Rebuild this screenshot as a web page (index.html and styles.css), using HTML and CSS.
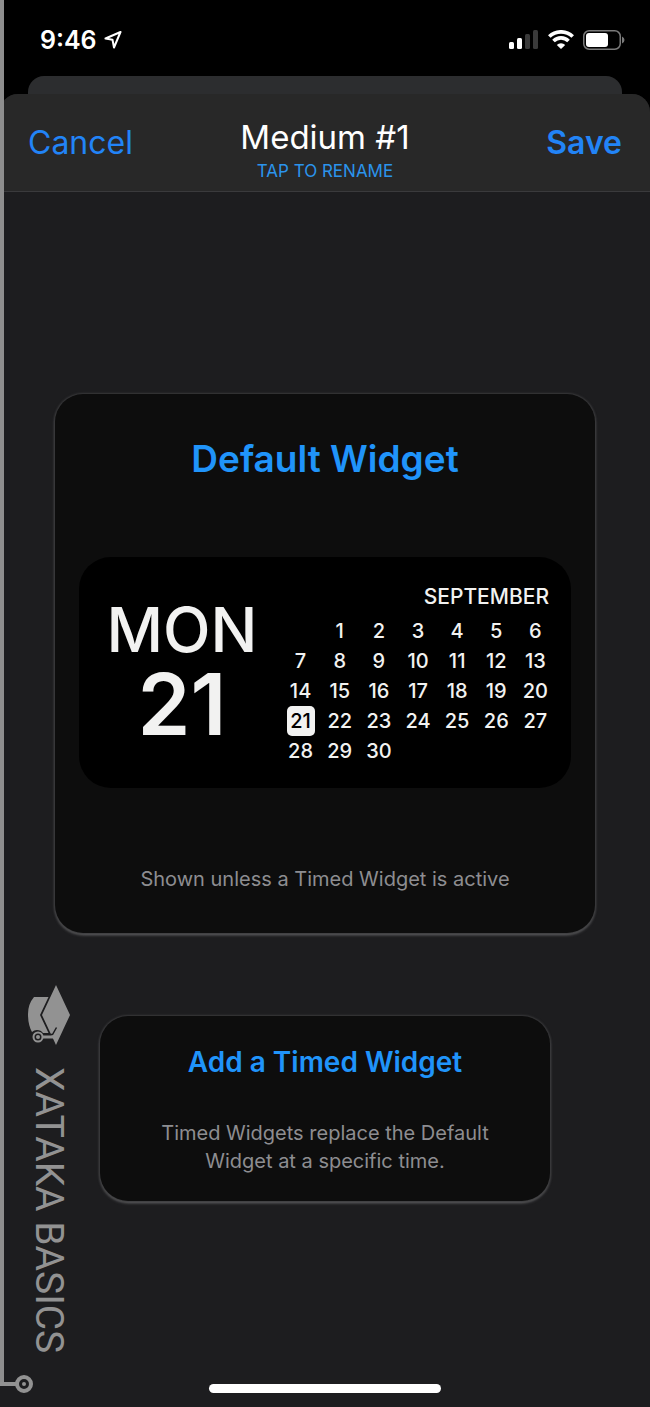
FILE: index.html
```html
<!DOCTYPE html>
<html lang="en">

<head>
    <meta charset="utf-8">
    <meta name="viewport" content="width=device-width, initial-scale=1">
    <title>Medium #1</title>
    <link rel="stylesheet" href="styles.css">
</head>

<body>

    <div class="status-bar">
        <div class="status-left">
            <span class="clock">9:46</span>
            <svg class="location-icon" width="18" height="18" viewBox="0 0 18 18">
                <path d="M16.500 1 L1.500 7.500 L8.500 8.800 L10 16.500 Z" />
            </svg>
        </div>
        <div class="status-right">
            <svg width="30" height="20" viewBox="0 0 30 20" fill="#fff">
                <rect x="0" y="12" width="5" height="7" rx="1.500" />
                <rect x="8" y="8" width="5" height="11" rx="1.500" />
                <rect x="16" y="4" width="5" height="15" rx="1.500" fill="#3a3a3a" />
                <rect x="24" y="0" width="5" height="19" rx="1.500" fill="#3a3a3a" />
            </svg>
            <svg width="26" height="20" viewBox="0 0 26 20" fill="none" stroke="#fff" stroke-width="3.700">
                <path d="M1.300 6.500 A17 17 0 0 1 24.700 6.500" />
                <path d="M5.500 11 A10.800 10.800 0 0 1 20.500 11" />
                <path d="M13 19 L8.800 14.900 A6 6 0 0 1 17.200 14.900 Z" fill="#fff" stroke="none" />
            </svg>
            <svg width="42" height="20" viewBox="0 0 42 20">
                <rect x="0.750" y="0.750" width="36.500" height="18.500" rx="5.500" fill="none" stroke="#7a7a7a" stroke-width="1.500" />
                <rect x="3" y="3" width="22" height="14" rx="3" fill="#fff" />
                <path d="M39 6.500 Q41.500 7.500 41.500 10 Q41.500 12.500 39 13.500 Z" fill="#7a7a7a" />
            </svg>
        </div>
    </div>

    <!-- edge of the page behind the sheet -->
    <div class="sheet-behind"></div>

    <div class="sheet">
        <header class="sheet-header">
            <button class="header-btn">Cancel</button>
            <div class="title-box">
                <h1>Medium #1</h1>
                <button class="rename-btn">TAP TO RENAME</button>
            </div>
            <button class="header-btn save-btn">Save</button>
        </header>

        <main class="content">
            <section class="card default-card">
                <h2>Default Widget</h2>
                <div class="widget">
                    <div class="today">
                        <div class="weekday">MON</div>
                        <div class="day">21</div>
                    </div>
                    <table class="month">
                        <caption>SEPTEMBER</caption>
                        <tbody>
                            <tr><td></td><td>1</td><td>2</td><td>3</td><td>4</td><td>5</td><td>6</td></tr>
                            <tr><td>7</td><td>8</td><td>9</td><td>10</td><td>11</td><td>12</td><td>13</td></tr>
                            <tr><td>14</td><td>15</td><td>16</td><td>17</td><td>18</td><td>19</td><td>20</td></tr>
                            <tr><td><span class="current">21</span></td><td>22</td><td>23</td><td>24</td><td>25</td><td>26</td><td>27</td></tr>
                            <tr><td>28</td><td>29</td><td>30</td><td></td><td></td><td></td><td></td></tr>
                        </tbody>
                    </table>
                </div>
                <p>Shown unless a Timed Widget is active</p>
            </section>

            <section class="card timed-card">
                <button class="add-btn">Add a Timed Widget</button>
                <p>Timed Widgets replace the Default Widget at a specific time.</p>
            </section>
        </main>

        <div class="home-indicator"></div>
    </div>

    <!-- watermark over the left edge -->
    <div class="watermark">
        <svg class="cap-icon" width="42" height="60" viewBox="0 0 42 60">
            <path d="M6 12 H20.500 L12 30 L20.500 48 H15 Q13 45 9 45 Q6 45 4 47 Q0 40 0 29 Q0 19 6 12 Z" />
            <path d="M28 0 L42 30 L28 60 L14 30 Z" />
            <path d="M15 49.500 H24.500 L28.500 42.500" fill="none" stroke="#1d1d1f" stroke-width="1.500" />
            <path d="M15 54.500 H25" fill="none" stroke="#1d1d1f" stroke-width="1.500" />
            <circle cx="10" cy="52" r="4.500" fill="#1d1d1f" stroke="#929292" stroke-width="2" />
            <circle cx="10" cy="52" r="2" />
            <path d="M14.500 50.500 H26 V53.500 H14.500 Z" />
        </svg>
        <span class="brand">XATAKA BASICS</span>
    </div>
    <div class="edge-line"></div>
    <svg class="edge-node" width="34" height="20" viewBox="0 0 34 20">
        <path d="M0 10 H16" fill="none" stroke="#929292" stroke-width="4" />
        <circle cx="24" cy="10" r="7" fill="#1d1d1f" stroke="#929292" stroke-width="4" />
        <circle cx="24" cy="10" r="2" />
    </svg>

</body>

</html>
```
FILE: styles.css
```css
* {
    box-sizing: border-box;
}

body {
    margin: 0;
    min-height: 100vh;
    display: flex;
    flex-direction: column;
    position: relative;
    background: #000;
    color: #fff;
    font-family: Inter, "Liberation Sans", sans-serif;
}

h1,
h2,
p {
    margin: 0;
}

button {
    border: none;
    padding: 0;
    background: none;
    font-family: inherit;
    cursor: pointer;
}

/* status bar */
.status-bar {
    height: 76px;
    padding: 4px 25px 0 40px;
    display: flex;
    align-items: center;
    justify-content: space-between;
}

.status-left {
    display: flex;
    align-items: center;
    gap: 7px;
}

.clock {
    font-size: 25px;
    font-weight: 600;
}

.location-icon {
    fill: none;
    stroke: #fff;
    stroke-width: 2;
    stroke-linejoin: round;
}

.status-right {
    display: flex;
    align-items: center;
    gap: 9px;
}

.sheet-behind {
    height: 36px;
    margin: 0 28px -18px;
    border-radius: 16px 16px 0 0;
    background: #2c2d2f;
}

/* sheet */
.sheet {
    flex-grow: 1;
    display: flex;
    flex-direction: column;
    position: relative;
    border-radius: 18px 18px 0 0;
    background: #1d1d1f;
    overflow: hidden;
}

.sheet-header {
    height: 98px;
    padding: 0 28px;
    display: grid;
    grid-template-columns: 1fr auto 1fr;
    align-items: center;
    background: #282828;
    border-bottom: 1px solid #3a3a3c;
}

.header-btn {
    justify-self: start;
    color: #2284f7;
    font-size: 32px;
}

.save-btn {
    justify-self: end;
    font-weight: 600;
}

.title-box {
    display: flex;
    flex-direction: column;
    align-items: center;
    padding-top: 16px;
}

h1 {
    font-size: 33px;
    font-weight: 400;
    line-height: 40px;
}

.rename-btn {
    color: #2b94ec;
    font-size: 17px;
    line-height: 28px;
}

.content {
    flex-grow: 1;
    padding: 202px 55px 0;
    display: flex;
    flex-direction: column;
    align-items: center;
    gap: 83px;
}

/* cards */
.card {
    display: flex;
    flex-direction: column;
    align-items: center;
    text-align: center;
    background: #0d0d0d;
    border-radius: 28px;
    box-shadow: 0 0 2px 1px #38383a, 0 2px 3px #6c6c6e;
}

.card p {
    color: #8d8d91;
    font-size: 20px;
    line-height: 28px;
}

.default-card {
    width: 100%;
    max-width: 720px;
    padding: 40px 24px;
}

h2 {
    color: #2094fa;
    font-size: 37px;
    font-weight: 600;
    line-height: 50px;
}

.widget {
    width: 100%;
    margin: 73px 0 77px;
    padding: 21px 16px 22px 24px;
    display: flex;
    align-items: center;
    justify-content: space-between;
    background: #000;
    border-radius: 32px;
    color: #f2f2f1;
}

.today {
    width: 158px;
    padding-bottom: 10px;
}

.weekday {
    font-size: 62px;
    font-weight: 500;
    line-height: 75px;
}

.day {
    font-size: 85px;
    font-weight: 600;
    line-height: 75px;
}

.month {
    width: 274px;
    table-layout: fixed;
    border-collapse: collapse;
    font-size: 20px;
    font-weight: 500;
}

.month caption {
    padding-right: 6px;
    text-align: right;
    font-size: 21px;
    line-height: 38px;
}

.month td {
    height: 30px;
    padding: 0;
    text-align: center;
    line-height: 30px;
}

.current {
    display: block;
    width: 28px;
    margin: 0 auto;
    border-radius: 5px;
    background: #f2f2f1;
    color: #000;
}

.timed-card {
    width: 450px;
    max-width: 100%;
    padding: 26px 48px;
    gap: 37px;
}

.add-btn {
    color: #2094fa;
    font-size: 28px;
    font-weight: 600;
    line-height: 40px;
}

.home-indicator {
    width: 232px;
    height: 9px;
    margin: 0 auto 14px;
    border-radius: 5px;
    background: #fff;
}

/* watermark */
.watermark {
    position: absolute;
    left: 28px;
    bottom: 54px;
    display: flex;
    flex-direction: column;
    gap: 22px;
    fill: #929292;
    color: #929292;
}

.brand {
    writing-mode: vertical-rl;
    font-family: Roboto, sans-serif;
    font-size: 39px;
    line-height: 42px;
}

.edge-line {
    position: absolute;
    left: 0;
    top: 0;
    bottom: 21px;
    width: 4px;
    background: #8e8e8e;
}

.edge-node {
    position: absolute;
    left: 0;
    bottom: 13px;
    fill: #929292;
}
```
